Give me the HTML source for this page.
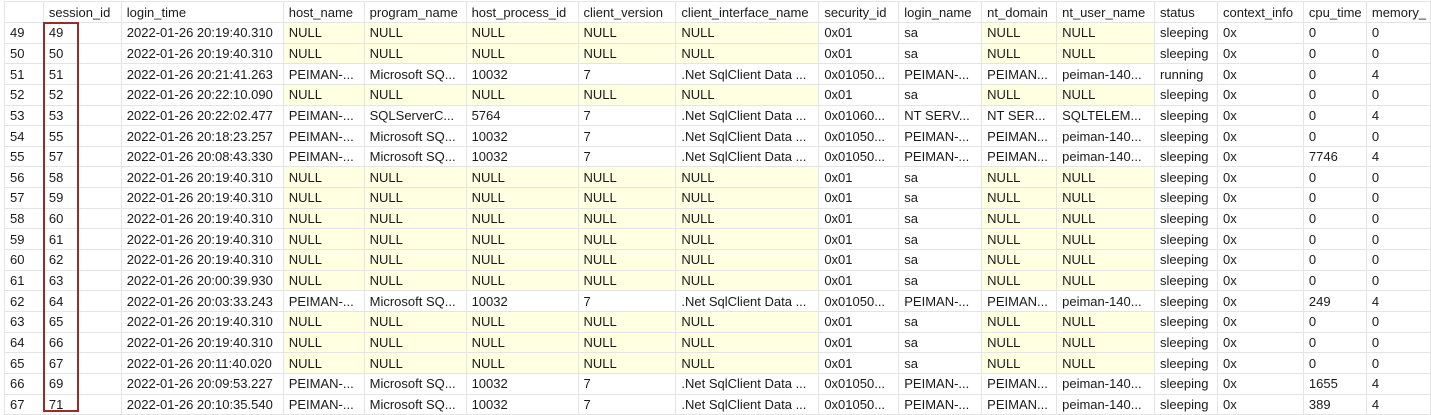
<!DOCTYPE html><html><head><style>
body{margin:0;width:1431px;height:414px;overflow:hidden;background:#fff;font-family:"Liberation Sans",sans-serif;font-size:13px;color:#1a1a1a}
table{border-collapse:collapse;table-layout:fixed;position:absolute;left:4px;top:1px}
td,th{height:19.65px;border:1px solid #e4e4e4;padding:0 0 0 5px;white-space:nowrap;overflow:hidden;text-align:left;font-weight:normal}
th{height:20px}
td.n{background:#ffffe1}
.box{position:absolute;left:43px;top:22px;width:32px;height:386px;border:2px solid #9b2b2b}
</style></head><body>
<table id="t"><colgroup>
<col style="width:39px"><col style="width:78px"><col style="width:162px"><col style="width:81px"><col style="width:102px"><col style="width:112px"><col style="width:98px"><col style="width:143px"><col style="width:80px"><col style="width:83px"><col style="width:75px"><col style="width:98px"><col style="width:63px"><col style="width:86px"><col style="width:63px"><col style="width:64px">
</colgroup>
<tr><th></th><th>session_id</th><th>login_time</th><th>host_name</th><th>program_name</th><th>host_process_id</th><th>client_version</th><th>client_interface_name</th><th>security_id</th><th>login_name</th><th>nt_domain</th><th>nt_user_name</th><th>status</th><th>context_info</th><th>cpu_time</th><th>memory_</th></tr>
<tr><td>49</td><td>49</td><td>2022-01-26 20:19:40.310</td><td class=n>NULL</td><td class=n>NULL</td><td class=n>NULL</td><td class=n>NULL</td><td class=n>NULL</td><td>0x01</td><td>sa</td><td class=n>NULL</td><td class=n>NULL</td><td>sleeping</td><td>0x</td><td>0</td><td>0</td></tr>
<tr><td>50</td><td>50</td><td>2022-01-26 20:19:40.310</td><td class=n>NULL</td><td class=n>NULL</td><td class=n>NULL</td><td class=n>NULL</td><td class=n>NULL</td><td>0x01</td><td>sa</td><td class=n>NULL</td><td class=n>NULL</td><td>sleeping</td><td>0x</td><td>0</td><td>0</td></tr>
<tr><td>51</td><td>51</td><td>2022-01-26 20:21:41.263</td><td>PEIMAN-...</td><td>Microsoft SQ...</td><td>10032</td><td>7</td><td>.Net SqlClient Data ...</td><td>0x01050...</td><td>PEIMAN-...</td><td>PEIMAN...</td><td>peiman-140...</td><td>running</td><td>0x</td><td>0</td><td>4</td></tr>
<tr><td>52</td><td>52</td><td>2022-01-26 20:22:10.090</td><td class=n>NULL</td><td class=n>NULL</td><td class=n>NULL</td><td class=n>NULL</td><td class=n>NULL</td><td>0x01</td><td>sa</td><td class=n>NULL</td><td class=n>NULL</td><td>sleeping</td><td>0x</td><td>0</td><td>0</td></tr>
<tr><td>53</td><td>53</td><td>2022-01-26 20:22:02.477</td><td>PEIMAN-...</td><td>SQLServerC...</td><td>5764</td><td>7</td><td>.Net SqlClient Data ...</td><td>0x01060...</td><td>NT SERV...</td><td>NT SER...</td><td>SQLTELEM...</td><td>sleeping</td><td>0x</td><td>0</td><td>4</td></tr>
<tr><td>54</td><td>55</td><td>2022-01-26 20:18:23.257</td><td>PEIMAN-...</td><td>Microsoft SQ...</td><td>10032</td><td>7</td><td>.Net SqlClient Data ...</td><td>0x01050...</td><td>PEIMAN-...</td><td>PEIMAN...</td><td>peiman-140...</td><td>sleeping</td><td>0x</td><td>0</td><td>0</td></tr>
<tr><td>55</td><td>57</td><td>2022-01-26 20:08:43.330</td><td>PEIMAN-...</td><td>Microsoft SQ...</td><td>10032</td><td>7</td><td>.Net SqlClient Data ...</td><td>0x01050...</td><td>PEIMAN-...</td><td>PEIMAN...</td><td>peiman-140...</td><td>sleeping</td><td>0x</td><td>7746</td><td>4</td></tr>
<tr><td>56</td><td>58</td><td>2022-01-26 20:19:40.310</td><td class=n>NULL</td><td class=n>NULL</td><td class=n>NULL</td><td class=n>NULL</td><td class=n>NULL</td><td>0x01</td><td>sa</td><td class=n>NULL</td><td class=n>NULL</td><td>sleeping</td><td>0x</td><td>0</td><td>0</td></tr>
<tr><td>57</td><td>59</td><td>2022-01-26 20:19:40.310</td><td class=n>NULL</td><td class=n>NULL</td><td class=n>NULL</td><td class=n>NULL</td><td class=n>NULL</td><td>0x01</td><td>sa</td><td class=n>NULL</td><td class=n>NULL</td><td>sleeping</td><td>0x</td><td>0</td><td>0</td></tr>
<tr><td>58</td><td>60</td><td>2022-01-26 20:19:40.310</td><td class=n>NULL</td><td class=n>NULL</td><td class=n>NULL</td><td class=n>NULL</td><td class=n>NULL</td><td>0x01</td><td>sa</td><td class=n>NULL</td><td class=n>NULL</td><td>sleeping</td><td>0x</td><td>0</td><td>0</td></tr>
<tr><td>59</td><td>61</td><td>2022-01-26 20:19:40.310</td><td class=n>NULL</td><td class=n>NULL</td><td class=n>NULL</td><td class=n>NULL</td><td class=n>NULL</td><td>0x01</td><td>sa</td><td class=n>NULL</td><td class=n>NULL</td><td>sleeping</td><td>0x</td><td>0</td><td>0</td></tr>
<tr><td>60</td><td>62</td><td>2022-01-26 20:19:40.310</td><td class=n>NULL</td><td class=n>NULL</td><td class=n>NULL</td><td class=n>NULL</td><td class=n>NULL</td><td>0x01</td><td>sa</td><td class=n>NULL</td><td class=n>NULL</td><td>sleeping</td><td>0x</td><td>0</td><td>0</td></tr>
<tr><td>61</td><td>63</td><td>2022-01-26 20:00:39.930</td><td class=n>NULL</td><td class=n>NULL</td><td class=n>NULL</td><td class=n>NULL</td><td class=n>NULL</td><td>0x01</td><td>sa</td><td class=n>NULL</td><td class=n>NULL</td><td>sleeping</td><td>0x</td><td>0</td><td>0</td></tr>
<tr><td>62</td><td>64</td><td>2022-01-26 20:03:33.243</td><td>PEIMAN-...</td><td>Microsoft SQ...</td><td>10032</td><td>7</td><td>.Net SqlClient Data ...</td><td>0x01050...</td><td>PEIMAN-...</td><td>PEIMAN...</td><td>peiman-140...</td><td>sleeping</td><td>0x</td><td>249</td><td>4</td></tr>
<tr><td>63</td><td>65</td><td>2022-01-26 20:19:40.310</td><td class=n>NULL</td><td class=n>NULL</td><td class=n>NULL</td><td class=n>NULL</td><td class=n>NULL</td><td>0x01</td><td>sa</td><td class=n>NULL</td><td class=n>NULL</td><td>sleeping</td><td>0x</td><td>0</td><td>0</td></tr>
<tr><td>64</td><td>66</td><td>2022-01-26 20:19:40.310</td><td class=n>NULL</td><td class=n>NULL</td><td class=n>NULL</td><td class=n>NULL</td><td class=n>NULL</td><td>0x01</td><td>sa</td><td class=n>NULL</td><td class=n>NULL</td><td>sleeping</td><td>0x</td><td>0</td><td>0</td></tr>
<tr><td>65</td><td>67</td><td>2022-01-26 20:11:40.020</td><td class=n>NULL</td><td class=n>NULL</td><td class=n>NULL</td><td class=n>NULL</td><td class=n>NULL</td><td>0x01</td><td>sa</td><td class=n>NULL</td><td class=n>NULL</td><td>sleeping</td><td>0x</td><td>0</td><td>0</td></tr>
<tr><td>66</td><td>69</td><td>2022-01-26 20:09:53.227</td><td>PEIMAN-...</td><td>Microsoft SQ...</td><td>10032</td><td>7</td><td>.Net SqlClient Data ...</td><td>0x01050...</td><td>PEIMAN-...</td><td>PEIMAN...</td><td>peiman-140...</td><td>sleeping</td><td>0x</td><td>1655</td><td>4</td></tr>
<tr><td>67</td><td>71</td><td>2022-01-26 20:10:35.540</td><td>PEIMAN-...</td><td>Microsoft SQ...</td><td>10032</td><td>7</td><td>.Net SqlClient Data ...</td><td>0x01050...</td><td>PEIMAN-...</td><td>PEIMAN...</td><td>peiman-140...</td><td>sleeping</td><td>0x</td><td>389</td><td>4</td></tr>
</table>
<div class="box"></div>
</body></html>
